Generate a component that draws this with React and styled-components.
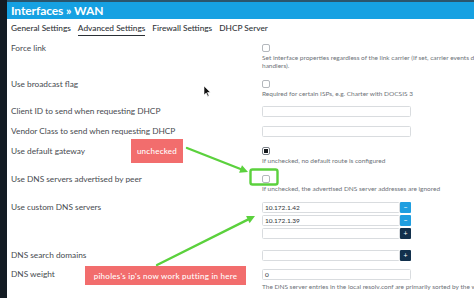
import React from 'react';
import styled, { createGlobalStyle } from 'styled-components';

const Global = createGlobalStyle`
  html, body { margin: 0; padding: 0; background: #fff; }
  body {
    font-family: Lato, "Open Sans", "Liberation Sans", sans-serif;
    width: 474px; height: 298px; overflow: hidden;
  }
  * { box-sizing: border-box; }
`;

const Screen = styled.div`
  position: relative;
  width: 474px;
  height: 298px;
  overflow: hidden;
  display: flex;
  background: #fff;
`;

const SideStrip = styled.div`
  width: 7px;
  flex: none;
  background: #131b23;
`;

const Main = styled.div`
  flex: 1;
  min-width: 0;
  display: flex;
  flex-direction: column;
  overflow: hidden;
`;

const TopStrip = styled.div`
  height: 2px;
  background: #2b556c;
`;

const Header = styled.div`
  height: 18px;
  background: #16a1e2;
  display: flex;
  align-items: center;
  padding-left: 4px;
  color: #fff;
  font-weight: 700;
  font-size: 12px;
  letter-spacing: -0.1px;
  white-space: nowrap;
`;

const Tabs = styled.div`
  display: flex;
  gap: 7px;
  padding: 4px 0 0 4px;
  white-space: nowrap;
`;

const Tab = styled.div`
  font-size: 8.3px;
  line-height: 10px;
  padding-bottom: 2px;
  color: #2f3338;
  font-weight: 500;
  border-bottom: 1.5px solid ${p => (p.$active ? '#2a2f35' : 'transparent')};
`;

const Form = styled.div`
  padding: 6px 0 0 4px;
  display: flex;
  flex-direction: column;
`;

const Row = styled.div`
  display: grid;
  grid-template-columns: 251px 420px;
  height: ${p => p.$h}px;
`;

const Label = styled.div`
  font-size: 8.3px;
  line-height: 12px;
  color: #474b50;
  white-space: nowrap;
`;

const Value = styled.div`
  padding-top: ${p => (p.$input ? 1 : 2)}px;
  display: flex;
  flex-direction: column;
  align-items: flex-start;
`;

const Check = styled.div`
  width: 8px;
  height: 8px;
  border: 1px solid ${p => (p.$checked ? '#7a8088' : '#b4b8bd')};
  border-radius: 2px;
  background: #fff;
  display: flex;
  align-items: center;
  justify-content: center;
  &::after {
    content: '';
    display: ${p => (p.$checked ? 'block' : 'none')};
    width: 4px;
    height: 4px;
    background: #15191d;
  }
`;

const Desc = styled.div`
  font-size: 6.5px;
  line-height: 8px;
  color: #6d7278;
  white-space: nowrap;
  margin-top: ${p => p.$mt ?? 2}px;
`;

const InputGroup = styled.div`
  display: flex;
  margin-bottom: 2px;
`;

const Input = styled.div`
  width: ${p => (p.$full ? 149 : 138)}px;
  height: 11px;
  border: 1px solid #d9dcdf;
  border-radius: 1.5px;
  font-size: 6.5px;
  line-height: 9px;
  padding-left: 2px;
  color: #2f3338;
  background: #fff;
`;

const AddonButton = styled.div`
  width: 11px;
  height: 11px;
  background: ${p => (p.$remove ? '#1f9ee0' : '#11304c')};
  color: #fff;
  font-size: 7px;
  line-height: 11px;
  text-align: center;
  border-radius: 1px;
`;

const Overlay = styled.svg`
  position: absolute;
  left: 0;
  top: 0;
  width: 474px;
  height: 298px;
  pointer-events: none;
`;

const Badge = styled.div`
  position: absolute;
  left: ${p => p.$x}px;
  top: ${p => p.$y}px;
  width: ${p => p.$w}px;
  height: ${p => p.$h}px;
  background: #f26d6d;
  color: #fff;
  font-size: 8px;
  font-weight: 500;
  display: flex;
  align-items: center;
  justify-content: center;
  white-space: nowrap;
  letter-spacing: 0.25px;
`;

const rows = [
  { label: 'Force link', h: 36, kind: 'check', desc: ['Set interface properties regardless of the link carrier (If set, carrier events do not invoke hotplug', 'handlers).'] },
  { label: 'Use broadcast flag', h: 27, kind: 'check', desc: ['Required for certain ISPs, e.g. Charter with DOCSIS 3'] },
  { label: 'Client ID to send when requesting DHCP', h: 20, kind: 'input' },
  { label: 'Vendor Class to send when requesting DHCP', h: 20, kind: 'input' },
  { label: 'Use default gateway', h: 28, kind: 'check', checked: true, desc: ['If unchecked, no default route is configured'] },
  { label: 'Use DNS servers advertised by peer', h: 28, kind: 'check', desc: ['If unchecked, the advertised DNS server addresses are ignored'] },
  { label: 'Use custom DNS servers', h: 48, kind: 'list', items: ['10.172.1.42', '10.172.1.39'] },
  { label: 'DNS search domains', h: 19, kind: 'list', items: [] },
  { label: 'DNS weight', h: 30, kind: 'input', value: '0', desc: ['The DNS server entries in the local resolv.conf are primarily sorted by the weight specified here'] },
];

function RowValue({ row }) {
  if (row.kind === 'check') {
    return (
      <Value>
        <Check $checked={row.checked} />
        {row.desc && (
          <Desc>
            {row.desc.map((d, i) => (
              <div key={i}>{d}</div>
            ))}
          </Desc>
        )}
      </Value>
    );
  }
  if (row.kind === 'input') {
    return (
      <Value $input>
        <Input $full>{row.value || ''}</Input>
        {row.desc && <Desc $mt={3}>{row.desc[0]}</Desc>}
      </Value>
    );
  }
  return (
    <Value $input>
      {row.items.map(v => (
        <InputGroup key={v}>
          <Input>{v}</Input>
          <AddonButton $remove>−</AddonButton>
        </InputGroup>
      ))}
      <InputGroup>
        <Input />
        <AddonButton>+</AddonButton>
      </InputGroup>
    </Value>
  );
}

export default function App() {
  return (
    <>
      <Global />
      <Screen>
        <SideStrip />
        <Main>
          <TopStrip />
          <Header>Interfaces » WAN</Header>
          <Tabs>
            <Tab>General Settings</Tab>
            <Tab $active>Advanced Settings</Tab>
            <Tab>Firewall Settings</Tab>
            <Tab>DHCP Server</Tab>
          </Tabs>
          <Form>
            {rows.map(r => (
              <Row key={r.label} $h={r.h}>
                <Label>{r.label}</Label>
                <RowValue row={r} />
              </Row>
            ))}
          </Form>
        </Main>

        <Badge $x={131} $y={139} $w={52} $h={24}>unchecked</Badge>
        <Badge $x={85} $y={266} $w={161} $h={19}>piholes's ip's now work putting in here</Badge>

        <Overlay viewBox="0 0 474 298">
          <g stroke="#5bd13d" strokeWidth="2.4" strokeLinecap="round" fill="none">
            <line x1="187" y1="148" x2="240.5" y2="169" />
            <line x1="157" y1="265" x2="247.8" y2="219.6" />
            <rect x="250.5" y="169.5" width="27" height="15" rx="2" />
          </g>
          <g fill="#5bd13d">
            <polygon points="248,172 239.1,172.8 242,165.3" />
            <polygon points="255,216 249.6,223.2 246.1,216" />
          </g>
          <path d="M204 86 L204 95 L206.2 93 L207.8 96.4 L209 95.8 L207.5 92.5 L210.3 92.3 Z" fill="#111" stroke="#fff" strokeWidth="0.6" />
        </Overlay>
      </Screen>
    </>
  );
}
